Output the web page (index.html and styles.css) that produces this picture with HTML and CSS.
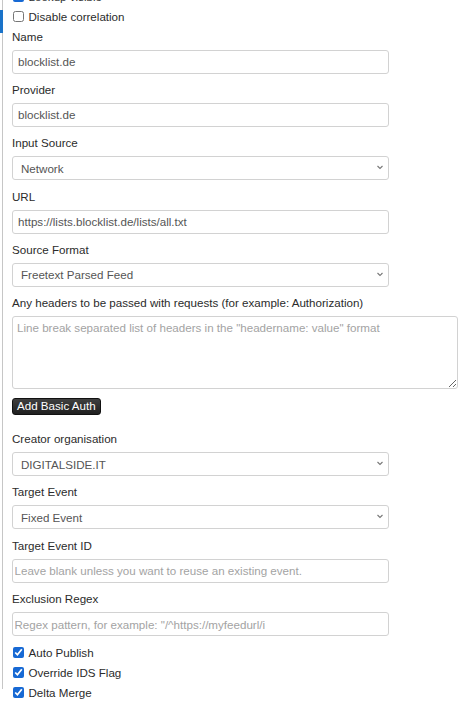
FILE: index.html
```html
<!DOCTYPE html>
<html>
<head>
<meta charset="utf-8">
<link rel="stylesheet" href="styles.css">
</head>
<body>
<div class="marker"></div>
<div class="frame">
  <div class="stack">
    <label class="check"><input type="checkbox" checked><span>Lookup visible</span></label>
    <label class="check"><input type="checkbox"><span>Disable correlation</span></label>

    <div class="fields">
      <div class="field">
        <label class="lbl">Name</label>
        <input class="control" type="text" value="blocklist.de">
      </div>
      <div class="field">
        <label class="lbl">Provider</label>
        <input class="control" type="text" value="blocklist.de">
      </div>
      <div class="field">
        <label class="lbl">Input Source</label>
        <div class="select-wrap">
          <select class="control sel"><option>Network</option></select>
          <svg class="chev" width="8" height="5" viewBox="0 0 8 5"><polyline points="1.5,1 4,3.5 6.5,1" fill="none" stroke="#777" stroke-width="1.1"/></svg>
        </div>
      </div>
      <div class="field">
        <label class="lbl">URL</label>
        <input class="control" type="text" value="https://lists.blocklist.de/lists/all.txt">
      </div>
      <div class="field">
        <label class="lbl">Source Format</label>
        <div class="select-wrap">
          <select class="control sel"><option>Freetext Parsed Feed</option></select>
          <svg class="chev" width="8" height="5" viewBox="0 0 8 5"><polyline points="1.5,1 4,3.5 6.5,1" fill="none" stroke="#777" stroke-width="1.1"/></svg>
        </div>
      </div>
      <div class="field">
        <label class="lbl">Any headers to be passed with requests (for example: Authorization)</label>
        <textarea class="area" placeholder="Line break separated list of headers in the &quot;headername: value&quot; format"></textarea>
      </div>
      <button class="btn" type="button">Add Basic Auth</button>
      <div class="field">
        <label class="lbl">Creator organisation</label>
        <div class="select-wrap">
          <select class="control sel"><option>DIGITALSIDE.IT</option></select>
          <svg class="chev" width="8" height="5" viewBox="0 0 8 5"><polyline points="1.5,1 4,3.5 6.5,1" fill="none" stroke="#777" stroke-width="1.1"/></svg>
        </div>
      </div>
      <div class="field">
        <label class="lbl">Target Event</label>
        <div class="select-wrap">
          <select class="control sel"><option>Fixed Event</option></select>
          <svg class="chev" width="8" height="5" viewBox="0 0 8 5"><polyline points="1.5,1 4,3.5 6.5,1" fill="none" stroke="#777" stroke-width="1.1"/></svg>
        </div>
      </div>
      <div class="field">
        <label class="lbl">Target Event ID</label>
        <input class="control ph" type="text" placeholder="Leave blank unless you want to reuse an existing event.">
      </div>
      <div class="field last">
        <label class="lbl">Exclusion Regex</label>
        <input class="control ph" type="text" placeholder="Regex pattern, for example: &quot;/^https://myfeedurl/i">
      </div>
    </div>

    <label class="check"><input type="checkbox" checked><span>Auto Publish</span></label>
    <label class="check"><input type="checkbox" checked><span>Override IDS Flag</span></label>
    <label class="check"><input type="checkbox" checked><span>Delta Merge</span></label>
  </div>
</div>
</body>
</html>
```

FILE: styles.css
```css
html, body {
  margin: 0;
  padding: 0;
  background: #ffffff;
  height: 703px;
  overflow: hidden;
}

body {
  font-family: "Liberation Sans", Arial, sans-serif;
  font-size: 11.6px;
  color: #2b2b2b;
  position: relative;
}

.marker {
  position: absolute;
  left: 0;
  top: 10px;
  width: 3px;
  height: 23px;
  background: #1a73c9;
}

.frame {
  margin-left: 2px;
  border-left: 1px solid #c6c6c6;
  padding-left: 9px;
  height: 703px;
  box-sizing: border-box;
}

.stack {
  margin-top: -14px;
}

.check {
  display: flex;
  align-items: center;
  gap: 5px;
  height: 20px;
  color: #2b2b2b;
}

.check input {
  width: 11px;
  height: 11px;
  margin: 0 0 0 0.5px;
  accent-color: #1769d4;
}

.fields {
  margin-top: 2.7px;
}

.lbl {
  display: block;
  line-height: 16px;
  margin-bottom: 5px;
  color: #2b2b2b;
}

.control {
  display: block;
  box-sizing: border-box;
  width: 377px;
  height: 24px;
  margin: 0 0 8.3px 0;
  padding: 0 5px;
  border: 1px solid #d2d2d2;
  border-radius: 3px;
  background: #ffffff;
  font-family: inherit;
  font-size: 11.6px;
  color: #555555;
  outline: none;
}

.control.ph {
  padding-left: 1.5px;
}

.control::placeholder,
.area::placeholder {
  color: #a3a3a3;
  opacity: 1;
}

.select-wrap {
  position: relative;
  width: 377px;
}

.sel {
  appearance: none;
  -webkit-appearance: none;
  padding-left: 8px;
}

.chev {
  position: absolute;
  right: 5px;
  top: 9px;
}

.area {
  display: block;
  box-sizing: border-box;
  width: 445.5px;
  height: 73px;
  margin: 0;
  padding: 3px 4px;
  border: 1px solid #d2d2d2;
  border-radius: 3px;
  font-family: inherit;
  font-size: 11.6px;
  line-height: 16px;
  color: #555555;
  resize: both;
  outline: none;
}

.btn {
  display: block;
  box-sizing: border-box;
  height: 16.6px;
  margin: 9px 0 16.4px 0;
  padding: 0 4px;
  border: 1px solid #111111;
  border-radius: 3px;
  background: linear-gradient(#404040, #1f1f1f);
  color: #ffffff;
  font-family: inherit;
  font-size: 11.6px;
  line-height: 14px;
}

.field.last .control {
  margin-bottom: 6.8px;
}
```
